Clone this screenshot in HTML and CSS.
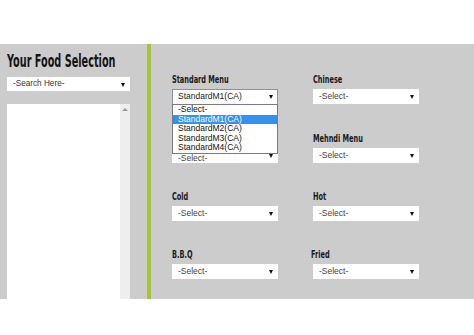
FILE: index.html
```html
<!DOCTYPE html>
<html>
<head>
<meta charset="utf-8">
<link rel="stylesheet" href="styles.css">
</head>
<body>
<div class="topbar"></div>
<div class="panel">
  <aside class="sidebar">
    <h1 class="title">Your Food Selection</h1>
    <div class="select search"><span>-Search Here-</span><i class="arrow"></i></div>
    <div class="listbox"><div class="scroll"><i class="up"></i></div></div>
  </aside>
  <div class="divider"></div>
  <main class="menus">
    <div class="field">
      <label>Standard Menu</label>
      <div class="select focused"><span>StandardM1(CA)</span><i class="arrow"></i>
        <ul class="options">
          <li>-Select-</li>
          <li class="hl">StandardM1(CA)</li>
          <li>StandardM2(CA)</li>
          <li>StandardM3(CA)</li>
          <li>StandardM4(CA)</li>
        </ul>
      </div>
    </div>
    <div class="field">
      <label>Chinese</label>
      <div class="select"><span>-Select-</span><i class="arrow"></i></div>
    </div>
    <div class="field">
      <label></label>
      <div class="select"><span class="peek">-Select-</span><i class="arrow"></i></div>
    </div>
    <div class="field">
      <label>Mehndi Menu</label>
      <div class="select"><span>-Select-</span><i class="arrow"></i></div>
    </div>
    <div class="field">
      <label>Cold</label>
      <div class="select"><span>-Select-</span><i class="arrow"></i></div>
    </div>
    <div class="field">
      <label>Hot</label>
      <div class="select"><span>-Select-</span><i class="arrow"></i></div>
    </div>
    <div class="field">
      <label>B.B.Q</label>
      <div class="select"><span>-Select-</span><i class="arrow"></i></div>
    </div>
    <div class="field shift">
      <label>Fried</label>
      <div class="select"><span>-Select-</span><i class="arrow"></i></div>
    </div>
  </main>
</div>
</body>
</html>
```
FILE: styles.css
```css
html, body {
  margin: 0;
  padding: 0;
  background: #ffffff;
  font-family: "Liberation Sans", Arial, sans-serif;
}
.topbar {
  height: 44px;
}
.panel {
  display: flex;
  height: 255px;
  background: #cccccc;
}
.sidebar {
  width: 140px;
  padding-left: 7px;
  display: flex;
  flex-direction: column;
}
.title {
  margin: 6px 0 0 0;
  height: 27px;
  font-family: "DejaVu Sans Condensed", "DejaVu Sans", sans-serif;
  font-weight: 700;
  font-size: 18px;
  line-height: 22px;
  color: #141414;
  white-space: nowrap;
  transform: scaleX(0.6);
  transform-origin: left center;
}
.select {
  position: relative;
  box-sizing: border-box;
  height: 15px;
  background: #ffffff;
  font-size: 8.5px;
  line-height: 15px;
  color: #444;
  padding-left: 6px;
}
.select .arrow {
  position: absolute;
  right: 5px;
  top: 6px;
  width: 0;
  height: 0;
  border-left: 2px solid transparent;
  border-right: 2px solid transparent;
  border-top: 4px solid #111;
}
.search {
  width: 123px;
  height: 14px;
  line-height: 14px;
  font-size: 8.2px;
  color: #333;
}
.listbox {
  margin-top: 13px;
  width: 123px;
  flex: 1;
  background: #ffffff;
  display: flex;
  justify-content: flex-end;
}
.scroll {
  width: 10px;
  background: #eeeeee;
  position: relative;
}
.scroll .up {
  position: absolute;
  left: 2px;
  top: 4px;
  width: 0;
  height: 0;
  border-left: 3px solid transparent;
  border-right: 3px solid transparent;
  border-bottom: 3px solid #999;
}
.divider {
  width: 4px;
  background: #a5c536;
}
.menus {
  box-sizing: border-box;
  padding: 30px 0 0 21px;
  display: grid;
  grid-template-columns: 106px 106px;
  column-gap: 35px;
  row-gap: 28px;
  align-content: start;
}
.field label {
  display: block;
  height: 12px;
  margin-bottom: 3px;
  font-family: "DejaVu Sans Condensed", "DejaVu Sans", sans-serif;
  font-weight: 700;
  font-size: 10px;
  line-height: 12px;
  color: #1a1a1a;
  white-space: nowrap;
  transform: scaleX(0.73);
  transform-origin: left center;
}
.field.shift label {
  margin-left: -2px;
}
.select .peek {
  position: relative;
  top: 3px;
}
.select.focused {
  border: 1px solid #7a93b8;
  padding-left: 5px;
  line-height: 13px;
  color: #222;
  height: 16px;
}
.select.focused .arrow {
  top: 5px;
  right: 4px;
}
.options {
  position: absolute;
  left: -1px;
  top: 14px;
  width: 106px;
  box-sizing: border-box;
  margin: 0;
  padding: 0;
  list-style: none;
  background: #ffffff;
  border: 1px solid #7a7a7a;
  z-index: 5;
}
.options li {
  height: 9.5px;
  line-height: 9.5px;
  font-size: 8.5px;
  padding-left: 5px;
  color: #111;
}
.options li.hl {
  background: #3391f0;
  color: #ffffff;
}
```
